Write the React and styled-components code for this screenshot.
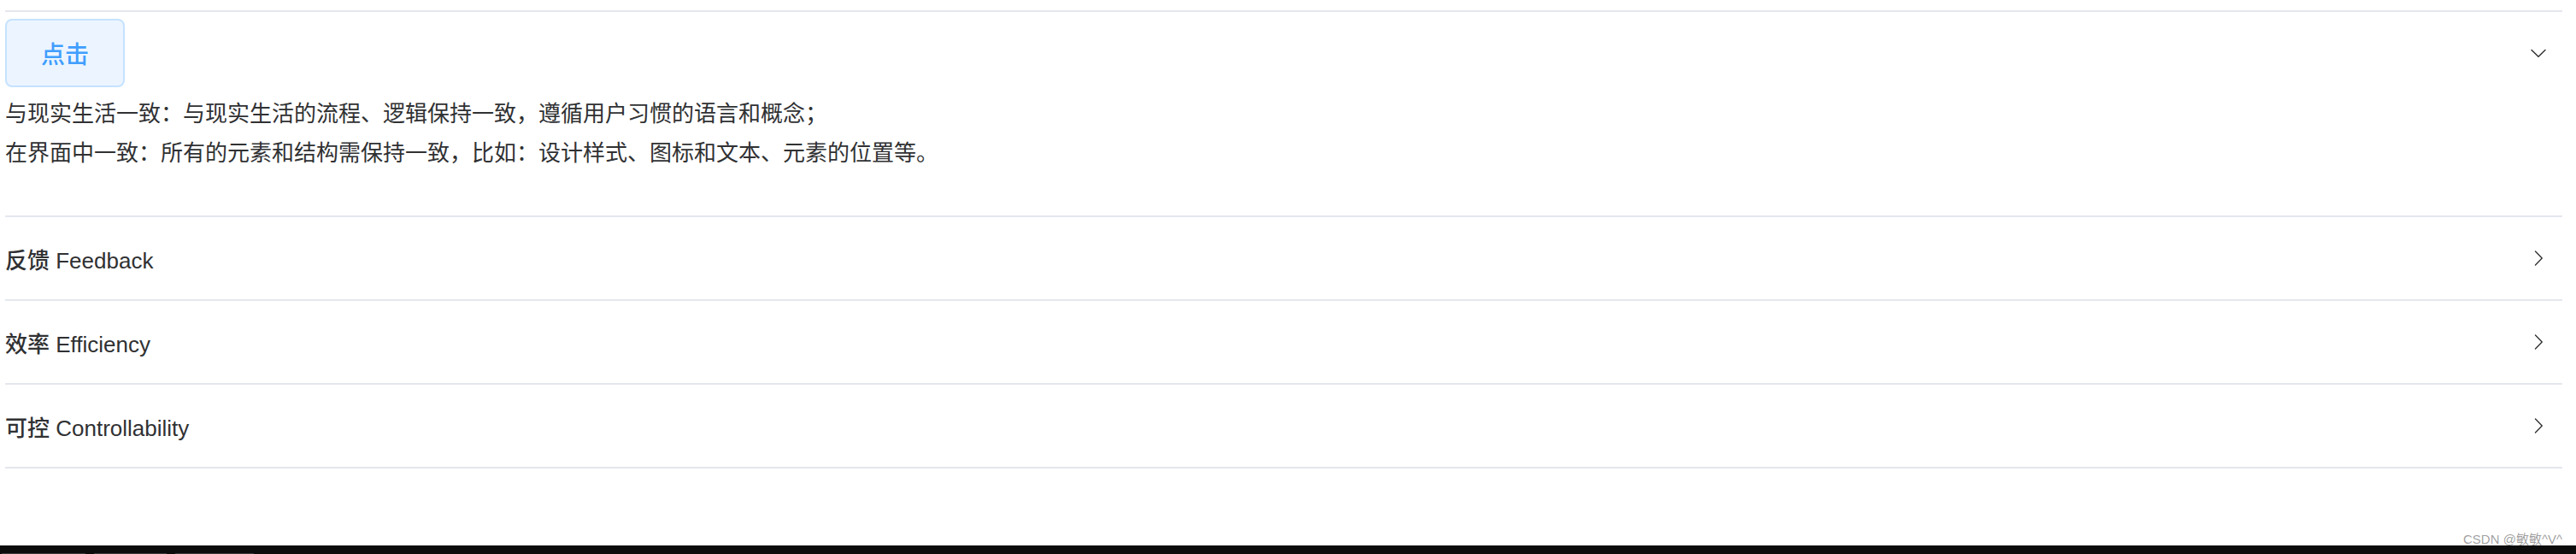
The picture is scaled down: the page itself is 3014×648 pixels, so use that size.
import { useState } from "react";
import styled, { createGlobalStyle } from "styled-components";

const GlobalStyle = createGlobalStyle`
  html, body {
    margin: 0;
    padding: 0;
    background: #ffffff;
  }
  body {
    font-family: "Helvetica Neue", Helvetica, "Liberation Sans", "Noto Sans CJK SC", sans-serif;
    color: #303133;
  }
`;

const Page = styled.div`
  position: relative;
  height: 648px;
  display: flex;
  flex-direction: column;
  overflow: hidden;
`;

const Collapse = styled.div`
  margin: 12px 16px 0 6px;
  border-top: 2px solid #e4e7ed;
`;

const Item = styled.div`
  border-bottom: 2px solid #e4e7ed;
`;

const Header = styled.div`
  height: 96px;
  display: flex;
  align-items: center;
  justify-content: space-between;
  font-family: "Liberation Sans", "Noto Sans CJK SC", sans-serif;
  font-size: 26px;
  font-weight: 500;
  color: #303133;
  cursor: pointer;
`;

const Arrow = styled.svg`
  width: 24px;
  height: 24px;
  margin-right: 16px;
  fill: #303133;
  transform: rotate(${({ $open }) => ($open ? 90 : 0)}deg);
`;

const Content = styled.div`
  padding-bottom: 50px;
  font-size: 26px;
  line-height: 46px;
  color: #303133;
`;

const PlainButton = styled.button`
  height: 80px;
  width: 140px;
  padding: 0;
  border: 2px solid #c6e2ff;
  border-radius: 8px;
  background: #ecf5ff;
  color: #409eff;
  font-family: "Noto Sans CJK SC", sans-serif;
  font-size: 28px;
  font-weight: 500;
  cursor: pointer;
`;

const Spacer = styled.div`
  flex: 1;
`;

const Taskbar = styled.div`
  height: 10px;
  background: #0b0b0b;
  display: flex;
  align-items: flex-end;
  gap: 10px;
  padding-left: 2px;
`;

const TaskTab = styled.div`
  width: ${({ $w }) => $w}px;
  height: 1px;
  background: #3a3a40;
`;

const Watermark = styled.div`
  position: absolute;
  right: 16px;
  bottom: 10px;
  font-size: 15px;
  line-height: 1;
  color: rgba(0, 0, 0, 0.4);
  font-family: "Liberation Sans", "Noto Sans CJK SC", sans-serif;
`;

const ArrowIcon = ({ open }) => (
  <Arrow viewBox="0 0 1024 1024" $open={open}>
    <path d="M340.864 149.312a30.592 30.592 0 0 0 0 43.264L652.736 512 340.864 831.424a30.592 30.592 0 0 0 0 43.264 29.12 29.12 0 0 0 41.728 0L714.24 534.336a32 32 0 0 0 0-44.672L382.592 149.376a29.12 29.12 0 0 0-41.728 0z" />
  </Arrow>
);

const items = [
  { key: "feedback", title: "反馈 Feedback" },
  { key: "efficiency", title: "效率 Efficiency" },
  { key: "controllability", title: "可控 Controllability" },
];

const App = () => {
  const [open, setOpen] = useState("consistency");
  const toggle = (key) => setOpen(open === key ? "" : key);

  return (
    <Page>
      <GlobalStyle />
      <Collapse>
        <Item>
          <Header onClick={() => toggle("consistency")}>
            <PlainButton>点击</PlainButton>
            <ArrowIcon open={open === "consistency"} />
          </Header>
          {open === "consistency" && (
            <Content>
              <div>与现实生活一致：与现实生活的流程、逻辑保持一致，遵循用户习惯的语言和概念；</div>
              <div>在界面中一致：所有的元素和结构需保持一致，比如：设计样式、图标和文本、元素的位置等。</div>
            </Content>
          )}
        </Item>
        {items.map((item) => (
          <Item key={item.key}>
            <Header onClick={() => toggle(item.key)}>
              {item.title}
              <ArrowIcon open={open === item.key} />
            </Header>
          </Item>
        ))}
      </Collapse>
      <Spacer />
      <Taskbar>
        <TaskTab $w={98} />
        <TaskTab $w={85} />
        <TaskTab $w={92} />
      </Taskbar>
      <Watermark>CSDN @敏敏^V^</Watermark>
    </Page>
  );
};

export default App;
